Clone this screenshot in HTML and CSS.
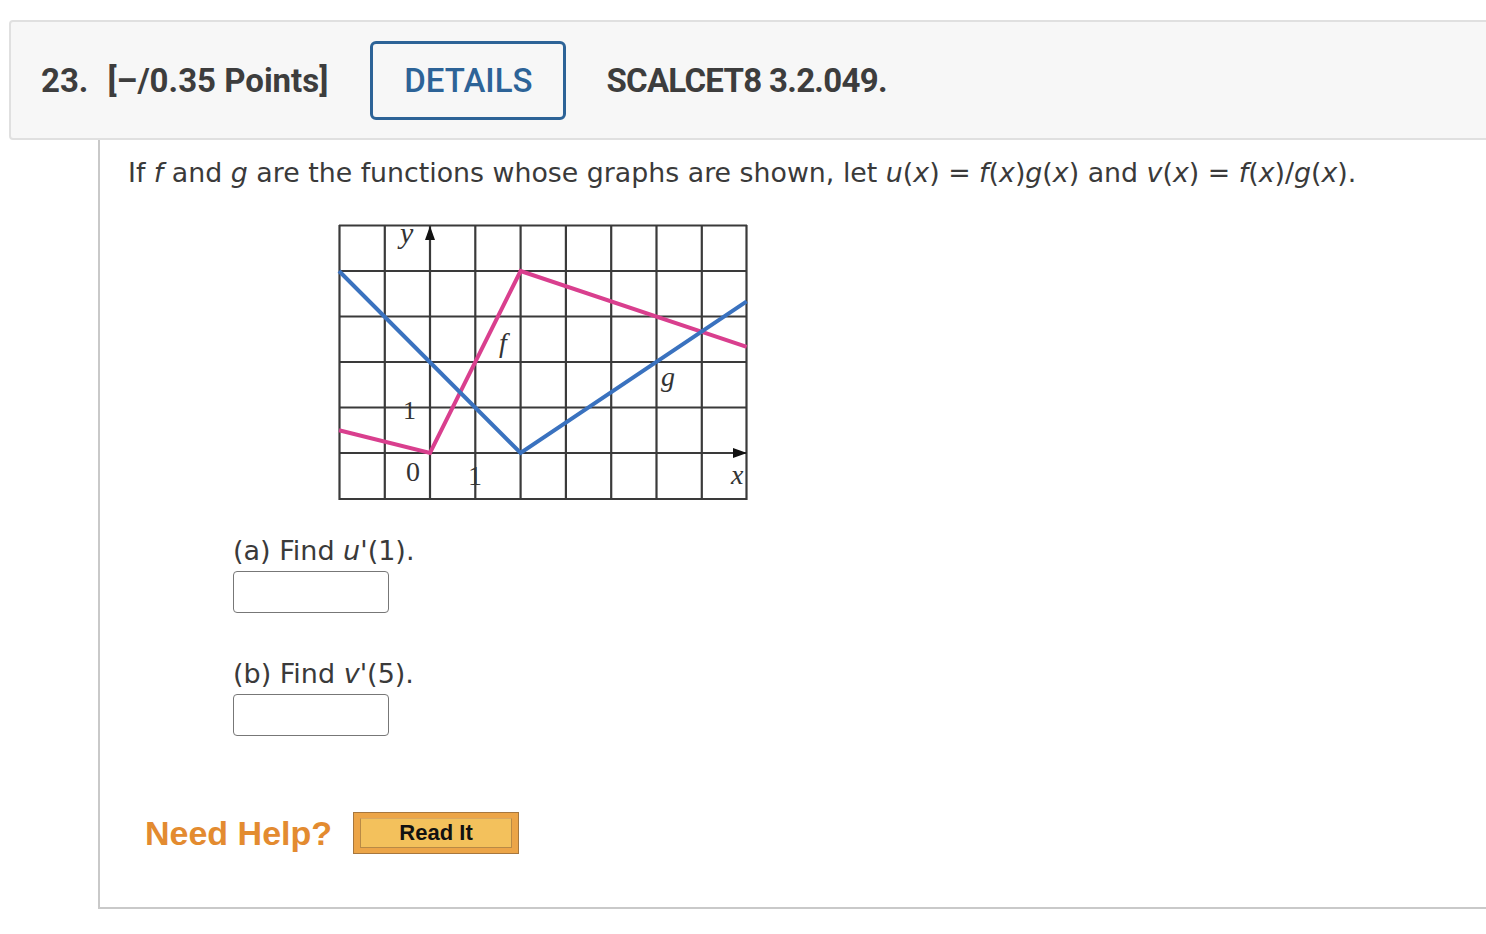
FILE: index.html
```html
<!DOCTYPE html>
<html>
<head>
<meta charset="utf-8">
<link rel="stylesheet" href="styles.css">
</head>
<body>
<div class="question">
  <div class="qhead">
    <span class="qnum">23.</span>
    <span class="qpts">[–/0.35 Points]</span>
    <span class="details">DETAILS</span>
    <span class="qref">SCALCET8 3.2.049.</span>
  </div>
  <div class="qbody">
    <p class="prompt">If <i>f</i> and <i>g</i> are the functions whose graphs are shown, let <i>u</i>(<i>x</i>) = <i>f</i>(<i>x</i>)<i>g</i>(<i>x</i>) and <i>v</i>(<i>x</i>) = <i>f</i>(<i>x</i>)/<i>g</i>(<i>x</i>).</p>
    <svg class="graph" width="410" height="277" viewBox="0 0 410 277">
      <g stroke="#3a3a3a" stroke-width="2.2" fill="none">
        <line x1="1" y1="1.5" x2="409" y2="1.5"/>
        <line x1="1" y1="47" x2="409" y2="47"/>
        <line x1="1" y1="92.5" x2="409" y2="92.5"/>
        <line x1="1" y1="138" x2="409" y2="138"/>
        <line x1="1" y1="183.5" x2="409" y2="183.5"/>
        <line x1="1" y1="229" x2="409" y2="229"/>
        <line x1="1" y1="275" x2="409" y2="275"/>
        <line x1="1.5" y1="1" x2="1.5" y2="276"/>
        <line x1="46.8" y1="1" x2="46.8" y2="276"/>
        <line x1="92" y1="1" x2="92" y2="276"/>
        <line x1="137.3" y1="1" x2="137.3" y2="276"/>
        <line x1="182.6" y1="1" x2="182.6" y2="276"/>
        <line x1="227.9" y1="1" x2="227.9" y2="276"/>
        <line x1="273.2" y1="1" x2="273.2" y2="276"/>
        <line x1="318.5" y1="1" x2="318.5" y2="276"/>
        <line x1="363.8" y1="1" x2="363.8" y2="276"/>
        <line x1="408.5" y1="1" x2="408.5" y2="276"/>
      </g>
      <g fill="#111">
        <polygon points="92,2 87,16 97,16"/>
        <polygon points="409,229 395,224 395,234"/>
      </g>
      <polyline points="1,206.2 92,229 182.6,47 408.7,122.8" fill="none" stroke="#d93f8e" stroke-width="4" stroke-linejoin="miter"/>
      <polyline points="1,47 182.6,229 408.7,77.3" fill="none" stroke="#3a72bf" stroke-width="4" stroke-linejoin="miter"/>
      <g font-family="'Liberation Serif', serif" font-size="28" fill="#333">
        <text x="62" y="19" font-size="30" font-style="italic">y</text>
        <text x="161" y="128" font-style="italic">f</text>
        <text x="323" y="162" font-style="italic">g</text>
        <text x="65" y="195" font-size="26">1</text>
        <text x="68" y="257">0</text>
        <text x="130" y="261">1</text>
        <text x="393" y="260" font-style="italic">x</text>
      </g>
    </svg>
    <div class="part">
      <div class="plabel">(a) Find <i>u</i>'(1).</div>
      <div class="answer"></div>
    </div>
    <div class="part">
      <div class="plabel">(b) Find <i>v</i>'(5).</div>
      <div class="answer"></div>
    </div>
    <div class="help">
      <span class="needhelp">Need Help?</span>
      <span class="readit"><span class="readit-in">Read It</span></span>
    </div>
  </div>
</div>
</body>
</html>
```
FILE: styles.css
```css
html, body {
  margin: 0;
  padding: 0;
  background: #fff;
  overflow: hidden;
}
.question {
  margin: 20px 0 0 9px;
  width: 1520px;
}
.qhead {
  box-sizing: border-box;
  height: 120px;
  background: #f7f7f7;
  border: 2px solid #e0e0e0;
  border-radius: 4px;
  display: flex;
  align-items: center;
  padding-left: 30px;
  font-family: Roboto, "Liberation Sans", sans-serif;
  font-weight: 700;
  font-size: 33px;
  color: #3d3d3d;
}
.qnum {
  margin-right: 19px;
}
.qpts {
  margin-right: 42px;
}
.details {
  box-sizing: border-box;
  width: 196px;
  height: 79px;
  border: 3px solid #2d6397;
  border-radius: 6px;
  color: #2d6397;
  font-weight: 500;
  display: flex;
  align-items: center;
  justify-content: center;
  margin-right: 40px;
}
.qref {
  letter-spacing: -0.7px;
}
.qbody {
  box-sizing: border-box;
  margin-left: 89px;
  height: 769px;
  border-left: 2px solid #c9c9c9;
  border-bottom: 2px solid #c9c9c9;
  padding-left: 28px;
  font-family: "DejaVu Sans", Verdana, sans-serif;
  color: #3a3a3a;
}
.prompt {
  margin: 0;
  padding-top: 17px;
  font-size: 26.8px;
  line-height: 32px;
}
.graph {
  display: block;
  overflow: visible;
  margin: 35px 0 0 210px;
}
.part {
  margin-left: 105px;
}
.part:first-of-type {
  margin-top: 34px;
}
.plabel {
  font-size: 27px;
  line-height: 32px;
}
.answer {
  box-sizing: border-box;
  width: 156px;
  height: 42px;
  border: 1.5px solid #777;
  border-radius: 4px;
  margin-top: 4px;
  margin-bottom: 45px;
}
.help {
  display: flex;
  align-items: center;
  margin: 76px 0 0 17px;
}
.needhelp {
  font-family: "Liberation Sans", Arial, sans-serif;
  font-weight: 700;
  font-size: 34px;
  color: #e38b30;
  margin-right: 21px;
}
.readit {
  box-sizing: border-box;
  width: 166px;
  height: 42px;
  background: #eca548;
  border: 1.5px solid #a7773e;
  padding: 5px 6px;
  display: flex;
}
.readit-in {
  flex: 1;
  background: #f3c15c;
  border: 1.5px solid #b98a45;
  border-top-color: #d9a860;
  display: flex;
  align-items: center;
  justify-content: center;
  font-family: "Liberation Sans", Arial, sans-serif;
  font-weight: 700;
  font-size: 22px;
  color: #111;
}
```
